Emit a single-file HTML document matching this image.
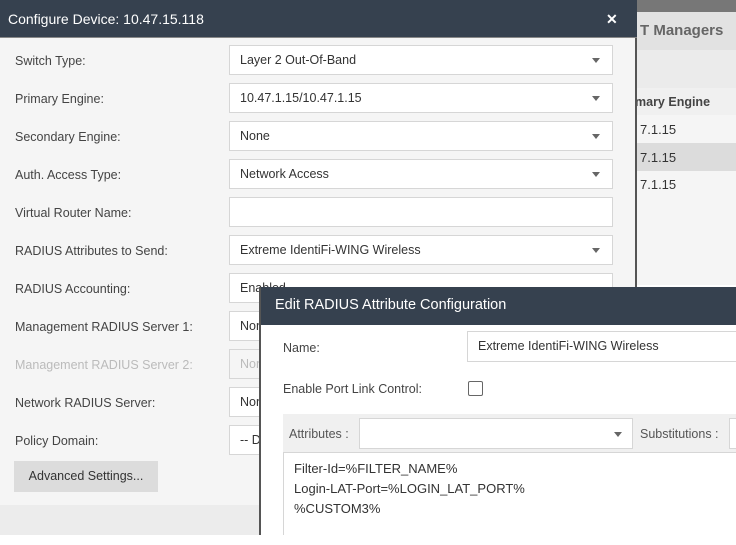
<!DOCTYPE html>
<html><head><style>
body{margin:0;width:736px;height:545px;overflow:hidden;position:relative;background:#fff;font-family:"Liberation Sans",sans-serif;font-size:12.5px;color:#333}
.a{position:absolute}
.lbl{position:absolute;left:15px;color:#444;font-size:12.5px}
.fld{position:absolute;left:229px;width:384px;height:30px;box-sizing:border-box;border:1px solid #d6d6d6;background:#fff;padding:0 10px;line-height:28px;color:#333}
.arr{position:absolute;right:12px;top:12px;width:0;height:0;border-left:4px solid transparent;border-right:4px solid transparent;border-top:5px solid #666}
</style></head><body>
<div class="a" style="left:0;top:0;width:736px;height:12px;background:#777"></div>
<div class="a" style="left:637px;top:12px;width:99px;height:273px;background:#f5f5f5"></div>
<div class="a" style="left:637px;top:12px;width:99px;height:38px;background:#e2e2e2"></div>
<div class="a" style="top:22px;font-size:15px;font-weight:bold;color:#666;left:640px">T Managers</div>
<div class="a" style="left:637px;top:50px;width:99px;height:38px;background:#ebebeb"></div>
<div class="a" style="left:637px;top:88px;width:99px;height:27px;background:#f0f0f0"></div>
<div class="a" style="left:635px;top:95px;font-weight:bold;color:#444">mary Engine</div>
<div class="a" style="left:637px;top:143px;width:99px;height:28px;background:#dcdcdc"></div>
<div class="a" style="left:640px;top:122px;font-size:13px">7.1.15</div>
<div class="a" style="left:640px;top:150px;font-size:13px">7.1.15</div>
<div class="a" style="left:640px;top:177px;font-size:13px">7.1.15</div>

<div class="a" style="left:0;top:0;width:637px;height:535px;background:#f5f5f5;border-right:2px solid #555;box-sizing:border-box"></div>
<div class="a" style="left:0;top:505px;width:635px;height:30px;background:#ececec"></div>
<div class="a" style="left:0;top:0;width:637px;height:38px;background:#36414f;border-bottom:1px solid #888;box-sizing:border-box"></div>
<div class="a" style="left:8px;top:11px;color:#fff;font-size:14px">Configure Device: 10.47.15.118</div>
<div class="a" style="left:606px;top:11px;color:#fff;font-size:14px;font-weight:bold;line-height:16px">✕</div>

<div class="lbl" style="top:54px">Switch Type:</div><div class="fld" style="top:45px">Layer 2 Out-Of-Band<div class="arr"></div></div>
<div class="lbl" style="top:92px">Primary Engine:</div><div class="fld" style="top:83px">10.47.1.15/10.47.1.15<div class="arr"></div></div>
<div class="lbl" style="top:130px">Secondary Engine:</div><div class="fld" style="top:121px">None<div class="arr"></div></div>
<div class="lbl" style="top:168px">Auth. Access Type:</div><div class="fld" style="top:159px">Network Access<div class="arr"></div></div>
<div class="lbl" style="top:206px">Virtual Router Name:</div><div class="fld" style="top:197px"></div>
<div class="lbl" style="top:244px">RADIUS Attributes to Send:</div><div class="fld" style="top:235px">Extreme IdentiFi-WING Wireless<div class="arr"></div></div>
<div class="lbl" style="top:282px">RADIUS Accounting:</div><div class="fld" style="top:273px">Enabled</div>
<div class="lbl" style="top:320px">Management RADIUS Server 1:</div><div class="fld" style="top:311px">None</div>
<div class="lbl" style="top:358px;color:#bbb">Management RADIUS Server 2:</div><div class="fld" style="top:349px;color:#bbb;background:#f5f5f5">None</div>
<div class="lbl" style="top:396px">Network RADIUS Server:</div><div class="fld" style="top:387px">None</div>
<div class="lbl" style="top:434px">Policy Domain:</div><div class="fld" style="top:425px">-- Default</div>
<div class="a" style="left:14px;top:461px;width:144px;height:31px;background:#dcdcdc;text-align:center;line-height:31px;color:#333">Advanced Settings...</div>

<div class="a" style="left:259px;top:287px;width:477px;height:248px;background:#fff;border-left:2px solid #555"></div>
<div class="a" style="left:261px;top:287px;width:475px;height:38px;background:#36414f"></div>
<div class="a" style="left:275px;top:297px;color:#fff;font-size:14.5px">Edit RADIUS Attribute Configuration</div>
<div class="a" style="left:283px;top:341px;color:#444">Name:</div>
<div class="a" style="left:467px;top:331px;width:280px;height:31px;border:1px solid #d6d6d6;box-sizing:border-box;padding-left:10px;line-height:29px">Extreme IdentiFi-WING Wireless</div>
<div class="a" style="left:283px;top:382px;color:#444">Enable Port Link Control:</div>
<div class="a" style="left:468px;top:381px;width:13px;height:13px;border:1px solid #666;border-radius:2px"></div>
<div class="a" style="left:283px;top:414px;width:453px;height:39px;background:#f0f0f0"></div>
<div class="a" style="left:289px;top:427px;color:#555">Attributes :</div>
<div class="a" style="left:359px;top:418px;width:274px;height:31px;background:#fff;border:1px solid #d6d6d6;box-sizing:border-box"><div class="arr" style="right:10px;top:13px"></div></div>
<div class="a" style="left:640px;top:427px;color:#555">Substitutions :</div>
<div class="a" style="left:729px;top:418px;width:20px;height:31px;background:#fff;border:1px solid #d6d6d6;box-sizing:border-box"></div>
<div class="a" style="left:283px;top:452px;width:460px;height:90px;border:1px solid #d6d6d6;box-sizing:border-box;background:#fff;padding:6px 0 0 10px;line-height:20px;font-size:13px;color:#333">Filter-Id=%FILTER_NAME%<br>Login-LAT-Port=%LOGIN_LAT_PORT%<br>%CUSTOM3%</div>
<div class="a" style="left:0;top:535px;width:736px;height:10px;background:#fff"></div>
</body></html>
